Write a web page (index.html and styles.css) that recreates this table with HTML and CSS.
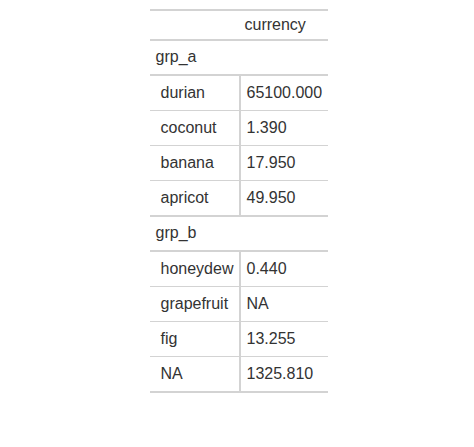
FILE: index.html
```html
<!DOCTYPE html>
<html>
<head>
<meta charset="utf-8">
<link rel="stylesheet" href="styles.css">
</head>
<body>
<div class="wrap">
<table class="gt">
  <thead>
    <tr class="labels">
      <th class="stubhead"></th>
      <th class="collabel">currency</th>
    </tr>
  </thead>
  <tbody>
    <tr class="group"><td colspan="2">grp_a</td></tr>
    <tr><td class="stub">durian</td><td class="val">65100.000</td></tr>
    <tr><td class="stub">coconut</td><td class="val">1.390</td></tr>
    <tr><td class="stub">banana</td><td class="val">17.950</td></tr>
    <tr><td class="stub">apricot</td><td class="val">49.950</td></tr>
    <tr class="group"><td colspan="2">grp_b</td></tr>
    <tr><td class="stub">honeydew</td><td class="val">0.440</td></tr>
    <tr><td class="stub">grapefruit</td><td class="val">NA</td></tr>
    <tr><td class="stub">fig</td><td class="val">13.255</td></tr>
    <tr><td class="stub">NA</td><td class="val">1325.810</td></tr>
  </tbody>
</table>
</div>
</body>
</html>
```

FILE: styles.css
```css
html, body {
  margin: 0;
  padding: 0;
  background: #ffffff;
}
.wrap {
  padding: 9px 0 0 3px;
}
.gt {
  margin: 0 auto;
  border-collapse: collapse;
  font-family: "Liberation Sans", Arial, sans-serif;
  font-size: 16px;
  color: #333333;
  border-top: 2px solid #D3D3D3;
  border-bottom: 2px solid #D3D3D3;
}
.gt th, .gt td {
  font-weight: normal;
  line-height: 18px;
}
.labels th {
  padding: 5px 5px 5px 5px;
  border-bottom: 2px solid #D3D3D3;
  text-align: left;
}
.stubhead {
  width: 80px;
}
.collabel {
  width: 78px;
}
.group td {
  padding: 7px 5px 8px 6px;
  border-top: 2px solid #D3D3D3;
  border-bottom: 2px solid #D3D3D3;
  text-align: left;
}
.stub {
  padding: 8px 5px 8px 11px;
  border-right: 2px solid #D3D3D3;
  border-bottom: 1px solid #D3D3D3;
  text-align: left;
}
.val {
  padding: 8px 5px 8px 6px;
  border-bottom: 1px solid #D3D3D3;
  text-align: left;
}
```
